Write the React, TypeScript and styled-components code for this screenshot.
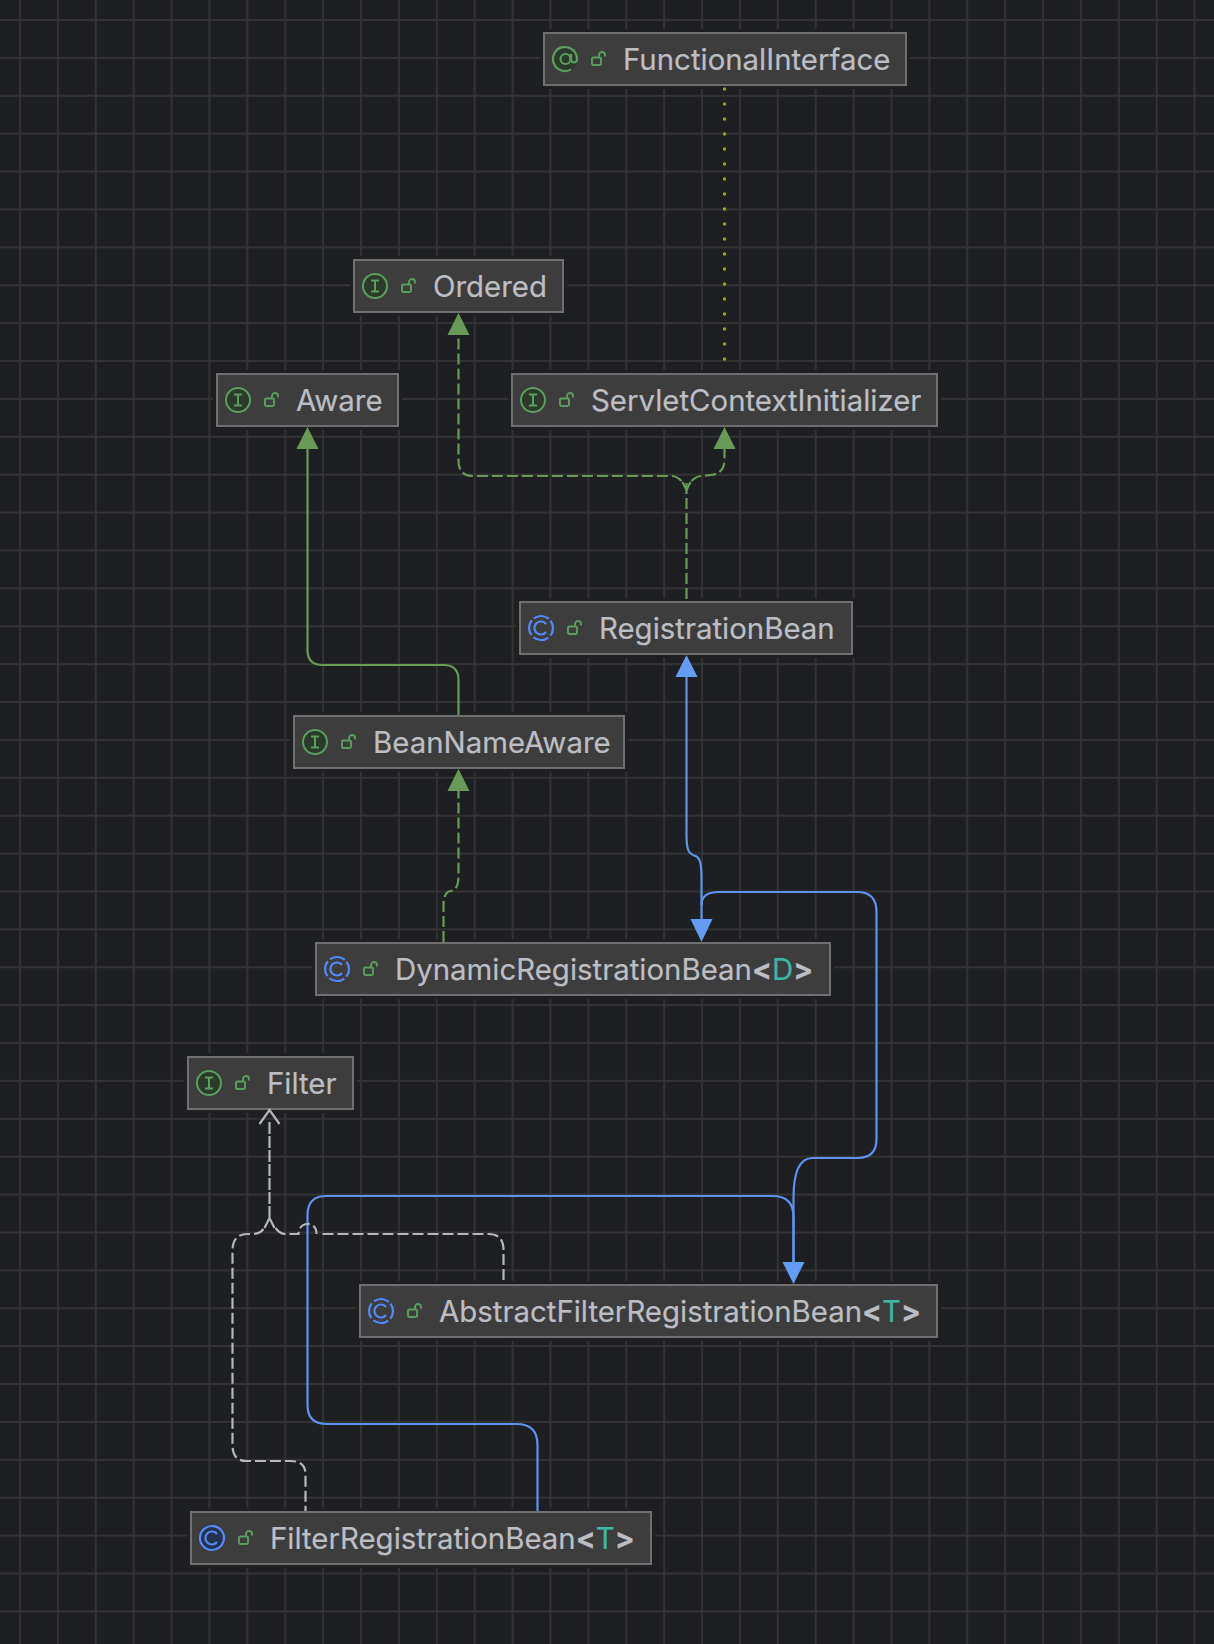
import styled, { createGlobalStyle } from 'styled-components';

const GREEN = '#6a9a58';
const BLUE = '#5c94ee';
const GREY = '#bcbec4';
const EDGE_GREY = '#b6b7bb';
const ICON_GREEN = '#5b9e5e';
const ICON_BLUE = '#548af7';
const DASH = '11 4';

const GlobalStyle = createGlobalStyle`
  html, body {
    margin: 0;
    padding: 0;
    background: #1e1f22;
  }
`;

const Canvas = styled.div`
  position: relative;
  width: 1214px;
  height: 1644px;
  overflow: hidden;
  background-color: #1e1f22;
  background-image:
    linear-gradient(to right, #333333 2px, transparent 2px),
    linear-gradient(to bottom, #333333 2px, transparent 2px);
  background-size: 37.9px 37.9px;
  background-position: 19px 19px;
  font-family: Inter, 'Liberation Sans', sans-serif;
`;

const NodeBox = styled.div<{ $x: number; $y: number; $w: number }>`
  position: absolute;
  left: ${(p) => p.$x}px;
  top: ${(p) => p.$y}px;
  width: ${(p) => p.$w}px;
  height: 54px;
  box-sizing: border-box;
  display: flex;
  align-items: center;
  padding-left: 6px;
  background: #3d3d3d;
  border: 2px solid #707070;
  box-shadow: 0 0 0 3px #1e1f22;
`;

const KindIcon = styled.svg`
  width: 28px;
  height: 28px;
  flex: none;
`;

const LockIcon = styled.svg`
  width: 16px;
  height: 16px;
  flex: none;
  margin: 0 17px 0 11px;
`;

const Label = styled.span`
  padding-top: 1px;
  font-size: 29.4px;
  line-height: 1;
  color: ${GREY};
  white-space: nowrap;
  -webkit-text-stroke: 0.2px ${GREY};
`;

const Bracket = styled.span`
  font-weight: 700;
`;

const TypeParam = styled.span`
  color: #3fb5a3;
  -webkit-text-stroke: 0.2px #3fb5a3;
`;

const Edges = styled.svg`
  position: absolute;
  left: 0;
  top: 0;
  width: 1214px;
  height: 1644px;
  fill: none;
`;

type Kind = 'annotation' | 'interface' | 'abstract' | 'class';

const Kinds = ({ kind }: { kind: Kind }) => {
  if (kind === 'annotation') {
    return (
      <KindIcon viewBox="0 0 28 28" fill="none" stroke={ICON_GREEN} strokeWidth="2.2">
        <circle cx="14" cy="14" r="12" fill="#2c3a2c" stroke="none" />
        <path d="M20 24.4A12 12 0 1 1 26 14c0 2-1.2 3.5-3 3.5s-3-1.5-3-3.5V9" />
        <circle cx="14.5" cy="14" r="5" />
      </KindIcon>
    );
  }
  if (kind === 'interface') {
    return (
      <KindIcon viewBox="0 0 28 28" fill="none" stroke={ICON_GREEN} strokeWidth="2">
        <circle cx="14" cy="14" r="12" fill="#2c3a2c" />
        <path d="M10 8.5h8M10 19.5h8M14 8.5v11" />
      </KindIcon>
    );
  }
  const dashed = kind === 'abstract';
  return (
    <KindIcon viewBox="0 0 28 28" fill="none" stroke={ICON_BLUE} strokeWidth="2.2">
      <circle
        cx="14"
        cy="14"
        r="12"
        fill={dashed ? 'none' : '#25324d'}
        strokeDasharray={dashed ? '16 2.85' : undefined}
        transform="rotate(-38 14 14)"
      />
      <path d="M19 10a6.5 6.5 0 1 0 0 8" />
    </KindIcon>
  );
};

const Lock = () => (
  <LockIcon viewBox="0 0 16 16" fill="none" stroke={ICON_GREEN} strokeWidth="1.9">
    <rect x="2" y="6.5" width="9" height="7.5" rx="1.2" />
    <path d="M9 6.5V4a3 3 0 0 1 6 0V5.5" />
  </LockIcon>
);

const Generic = ({ name }: { name: string }) => (
  <>
    <Bracket>&lt;</Bracket>
    <TypeParam>{name}</TypeParam>
    <Bracket>&gt;</Bracket>
  </>
);

const nodes: { name: string; kind: Kind; x: number; y: number; w: number; param?: string }[] = [
  { name: 'FunctionalInterface', kind: 'annotation', x: 543, y: 32, w: 364 },
  { name: 'Ordered', kind: 'interface', x: 353, y: 259, w: 211 },
  { name: 'Aware', kind: 'interface', x: 216, y: 373, w: 183 },
  { name: 'ServletContextInitializer', kind: 'interface', x: 511, y: 373, w: 427 },
  { name: 'RegistrationBean', kind: 'abstract', x: 519, y: 601, w: 334 },
  { name: 'BeanNameAware', kind: 'interface', x: 293, y: 715, w: 332 },
  { name: 'DynamicRegistrationBean', kind: 'abstract', x: 315, y: 942, w: 516, param: 'D' },
  { name: 'Filter', kind: 'interface', x: 187, y: 1056, w: 167 },
  { name: 'AbstractFilterRegistrationBean', kind: 'abstract', x: 359, y: 1284, w: 579, param: 'T' },
  { name: 'FilterRegistrationBean', kind: 'class', x: 190, y: 1511, w: 462, param: 'T' },
];

const lines: { d: string; color: string; dash?: string }[] = [
  // realizes: RegistrationBean -> Ordered / ServletContextInitializer
  { d: 'M686 483V601', color: GREEN, dash: DASH },
  { d: 'M682 482L686 490L690 482', color: GREEN },
  { d: 'M681 481C678 478 675 476 671 476H473Q458 476 458 461V335', color: GREEN, dash: DASH },
  { d: 'M691 481C694 478 697 476 701 476L710 475Q724 474 724 459V449', color: GREEN, dash: DASH },
  // extends: BeanNameAware -> Aware
  { d: 'M458 715V680Q458 665 443 665H322Q307 665 307 650V449', color: GREEN },
  // realizes: DynamicRegistrationBean -> BeanNameAware
  { d: 'M443 942V905C443 897 445 892 450 891C456 890 458 885 458 875V791', color: GREEN, dash: DASH },
  // extends: Dynamic -> Registration
  { d: 'M701 919V880C701 865 700 858 695 856C688 854 686 850 686 835V677', color: BLUE },
  // extends: AbstractFilter -> Dynamic
  {
    d: 'M793 1262V1198Q793 1158 812 1158H857Q876 1158 876 1139V912Q876 892 857 892H718Q701 892 701 905',
    color: BLUE,
  },
  // extends: FilterRegistrationBean -> AbstractFilter
  {
    d: 'M537 1511V1445Q537 1424 516 1424H326Q307 1424 307 1405V1215Q307 1196 326 1196H772Q793 1196 793 1217V1262',
    color: BLUE,
  },
  // dependency: -> Filter
  { d: 'M269 1122V1217', color: EDGE_GREY, dash: '12 2' },
  { d: 'M264 1228L269 1218L274 1228', color: EDGE_GREY },
  {
    d: 'M263 1229C260 1233 256 1234 252 1234H247Q232 1234 232 1251V1445Q232 1461 246 1461H290Q305 1461 305 1474V1511',
    color: EDGE_GREY,
    dash: DASH,
  },
  { d: 'M275 1228C278 1232 281 1234 285 1234', color: EDGE_GREY },
  {
    d: 'M289 1234H298C298 1228 302 1224 307 1224C313 1224 316 1228 316 1234',
    color: EDGE_GREY,
    dash: DASH,
  },
  { d: 'M322 1234H488Q503 1234 503 1250V1284', color: EDGE_GREY, dash: DASH },
];

const heads: { points: string; color: string }[] = [
  { points: '458,313 447,335 469,335', color: GREEN },
  { points: '724,427 713,449 735,449', color: GREEN },
  { points: '307,427 296,449 318,449', color: GREEN },
  { points: '458,769 447,791 469,791', color: GREEN },
  { points: '686,655 675,677 697,677', color: '#639cf2' },
  { points: '701,942 690,919 712,919', color: '#639cf2' },
  { points: '793,1284 782,1262 804,1262', color: '#639cf2' },
];

export default function App() {
  return (
    <>
      <GlobalStyle />
      <Canvas>
        {nodes.map((n) => (
          <NodeBox key={n.name} $x={n.x} $y={n.y} $w={n.w}>
            <Kinds kind={n.kind} />
            <Lock />
            <Label>
              {n.name}
              {n.param && <Generic name={n.param} />}
            </Label>
          </NodeBox>
        ))}
        <Edges viewBox="-0.5 0 1214 1644">
          <path
            d="M724 89V373"
            stroke="#a3a31e"
            strokeWidth="3.4"
            strokeLinecap="round"
            strokeDasharray="0 15"
          />
          {lines.map((l) => (
            <path key={l.d} d={l.d} stroke={l.color} strokeWidth="2.2" strokeDasharray={l.dash} />
          ))}
          {heads.map((h) => (
            <polygon key={h.points} points={h.points} fill={h.color} />
          ))}
          <path d="M259 1124L269 1110L279 1124" stroke={EDGE_GREY} strokeWidth="2.2" />
        </Edges>
      </Canvas>
    </>
  );
}
